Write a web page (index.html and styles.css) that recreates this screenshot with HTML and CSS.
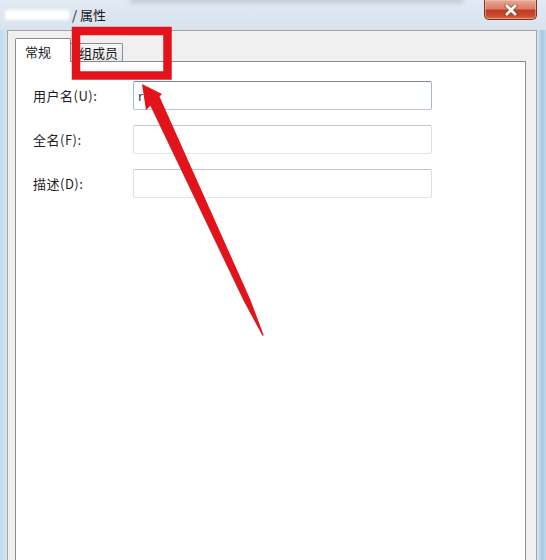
FILE: index.html
```html
<!DOCTYPE html>
<html lang="zh-CN">
<head>
<meta charset="utf-8">
<title>属性</title>
<link rel="stylesheet" href="styles.css">
</head>
<body>
<div class="window">
  <div class="titlebar">
    <span class="name-blur"></span>
    <span class="title">/ 属性</span>
    <div class="close">
      <svg width="16" height="12" viewBox="0 0 16 12"><path d="M4 2 L12 10 M12 2 L4 10" stroke="#5a2418" stroke-width="4.4" stroke-linecap="square" fill="none" opacity="0.55"/><path d="M4 2 L12 10 M12 2 L4 10" stroke="#ffffff" stroke-width="2.8" stroke-linecap="square" fill="none"/></svg>
    </div>
  </div>
  <div class="frame">
    <div class="client">
      <div class="tabs">
        <div class="tab active">常规</div>
        <div class="tab">组成员</div>
      </div>
      <div class="panel">
        <div class="form">
          <span class="label">用户名(U):</span>
          <div class="field focus">r</div>
          <span class="label">全名(F):</span>
          <div class="field"></div>
          <span class="label">描述(D):</span>
          <div class="field"></div>
        </div>
      </div>
    </div>
  </div>
  <svg class="annot" width="546" height="560" viewBox="0 0 546 560">
    <rect x="76" y="31" width="91.5" height="44.5" fill="none" stroke="#e3131b" stroke-width="8.5"/>
    <polygon points="142,84 162,94 159.5,96.5 250.5,300 263.8,335.5 262.6,335.5 243.5,300 150.5,105.5 146,110" fill="#e3131b"/>
    <polyline points="150.5,105.5 243.5,300 262.6,335.5" fill="none" stroke="#9a1a1a" stroke-width="0.8" opacity="0.6"/>
  </svg>
</div>
</body>
</html>
```
FILE: styles.css
```css
* { box-sizing: border-box; }
body { margin: 0; }
.window {
  position: relative;
  width: 546px;
  height: 560px;
  overflow: hidden;
  display: flex;
  flex-direction: column;
  background: #d3e2f0;
  font-family: "Noto Sans CJK SC", "Noto Sans", sans-serif;
}
.titlebar {
  position: relative;
  height: 30px;
  flex: none;
  display: flex;
  align-items: center;
  padding: 0 9px 0 5px;
  background: linear-gradient(#e2eaf3, #d8e3ee);
}
.titlebar::before {
  content: "";
  position: absolute;
  left: 130px;
  top: -3px;
  width: 333px;
  height: 6px;
  background: #8a97a5;
  filter: blur(2.5px);
  opacity: 0.4;
}
.name-blur {
  width: 64px;
  height: 10px;
  background: #ffffff;
  filter: blur(1.5px);
}
.title {
  margin-left: 3px;
  font-size: 13px;
  line-height: 16px;
  color: #1a1a1a;
}
.close {
  margin-left: auto;
  align-self: flex-start;
  width: 53px;
  height: 20px;
  display: flex;
  align-items: center;
  justify-content: center;
  border: 1px solid #7a3326;
  border-top: none;
  border-radius: 0 0 5px 5px;
  background: linear-gradient(#e6a896 0%, #d9806a 45%, #c23d24 55%, #c8482e 80%, #d96b4c 100%);
  box-shadow: inset 0 0 0 1px rgba(255, 210, 195, 0.45);
}
.frame {
  flex: 1;
  display: flex;
  padding: 0 9px 0 7px;
  background: linear-gradient(to right, #c4d9ee 0, #d6e4f1 7px, #dbe8f4 537px, #a9c6e6 542px, #c2d7ec 546px);
}
.client {
  flex: 1;
  display: flex;
  flex-direction: column;
  background: #f0f0f0;
  border: 1px solid #a3a3a3;
  border-bottom: none;
  padding: 7px 10px 0 7px;
}
.tabs {
  display: flex;
  align-items: flex-end;
  height: 23px;
  font-size: 13px;
  color: #1a1a1a;
}
.tab {
  height: 18px;
  line-height: 16px;
  padding: 1px 4px 0 8px;
  border: 1px solid #898c95;
  border-left: none;
  border-bottom: none;
  border-radius: 0 2px 0 0;
  background: linear-gradient(#f6f6f6, #e6e6e6);
}
.tab.active {
  position: relative;
  z-index: 1;
  height: 24px;
  margin-bottom: -1px;
  line-height: 16px;
  padding: 5px 19px 0 9px;
  border-left: 1px solid #898c95;
  border-radius: 2px 2px 0 0;
  background: #ffffff;
}
.panel {
  flex: 1;
  background: #ffffff;
  border: 1px solid #898c95;
  border-bottom: none;
  padding: 19px 0 0 17px;
}
.form {
  display: grid;
  grid-template-columns: 100px 299px;
  row-gap: 15px;
  align-items: center;
  font-size: 13px;
  color: #1e1e1e;
}
.label {
  line-height: 16px;
  letter-spacing: 0.5px;
}
.field {
  height: 29px;
  border: 1px solid;
  border-color: #c3c6cc #dde0e5 #e3e6ea #dde0e5;
  border-radius: 2px;
  padding: 0 4px;
  line-height: 27px;
  color: #333333;
}
.field.focus {
  border-color: #7d8a99 #a9b8c8 #b8c6d4 #a9b8c8;
}
.annot {
  position: absolute;
  left: 0;
  top: 0;
  pointer-events: none;
}
```
